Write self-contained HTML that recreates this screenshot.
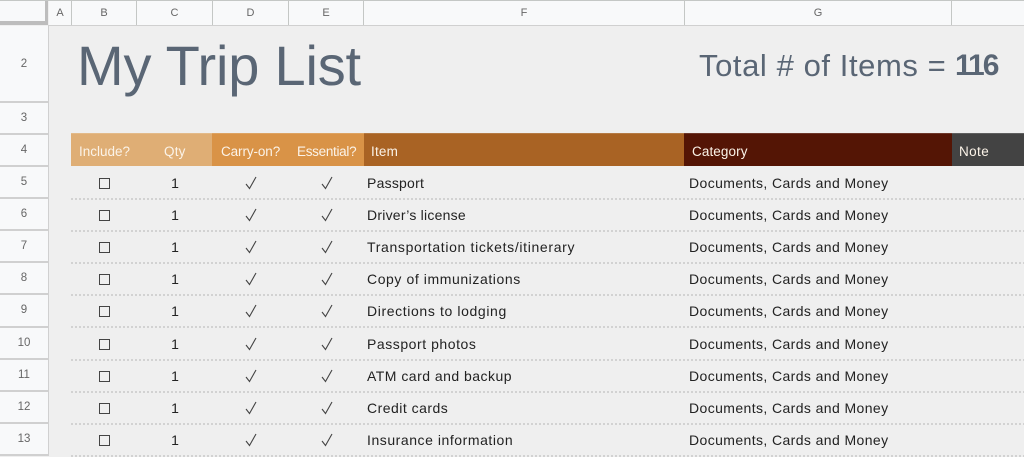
<!DOCTYPE html>
<html><head><meta charset="utf-8"><style>
html,body{margin:0;padding:0}
body{width:1024px;height:456px;overflow:hidden;background:#efefef;position:relative;font-family:"Liberation Sans",sans-serif}
div{position:absolute;white-space:nowrap}
.ch{top:1px;height:24px;background:#f8f9fa;border-right:1px solid #c4c7c5;color:#666;font-size:11px;line-height:25px;text-align:center}
.rh{left:0;width:48px;background:#f8f9fa;border-bottom:2px solid #d0d0d0;box-sizing:border-box;color:#666;font-size:11.5px;text-align:center}
.h{top:133px;height:33px;line-height:37px;color:#fbf3e8;font-size:13.5px;letter-spacing:.2px;border-top:1px solid rgba(255,255,255,.15);box-sizing:border-box}
.c{text-align:center;color:#222;font-size:14px;height:20px;line-height:20px}
.t{color:#222;font-size:14px;letter-spacing:.4px;height:20px;line-height:20px}
.d{left:71px;width:953px;height:2px;background:repeating-linear-gradient(90deg,#d2d2d2 0,#d2d2d2 2px,transparent 2px,transparent 4px)}
.b{left:99px;width:9px;height:9px;border:1px solid #444}
svg{position:absolute}
</style></head><body>
<div style="left:0;top:0;width:1024px;height:1px;background:#c4c7c5"></div>
<div style="left:0;top:1px;width:45px;height:20px;background:#f8f9fa;border-right:3px solid #bdbdbd;border-bottom:4px solid #bdbdbd"></div>
<div class="ch" style="left:49px;width:22px">A</div>
<div class="ch" style="left:72px;width:64px">B</div>
<div class="ch" style="left:137px;width:75px">C</div>
<div class="ch" style="left:213px;width:75px">D</div>
<div class="ch" style="left:289px;width:74px">E</div>
<div class="ch" style="left:364px;width:320px">F</div>
<div class="ch" style="left:685px;width:266px">G</div>
<div class="ch" style="left:952px;width:72px;border-right:0"></div>
<div style="left:48px;top:25px;width:976px;height:1px;background:#d0d0d0"></div>
<div style="left:48px;top:26px;width:1px;height:430px;background:#d0d0d0"></div>

<div class="rh" style="top:26px;height:77px;line-height:76px">2</div>
<div class="rh" style="top:103px;height:32px;line-height:30px">3</div>
<div class="rh" style="top:135px;height:32px;line-height:30px">4</div>
<div class="rh" style="top:167px;height:32px;line-height:30px">5</div>
<div class="rh" style="top:199px;height:32px;line-height:30px">6</div>
<div class="rh" style="top:231px;height:32px;line-height:30px">7</div>
<div class="rh" style="top:263px;height:32px;line-height:30px">8</div>
<div class="rh" style="top:295px;height:33px;line-height:30px">9</div>
<div class="rh" style="top:328px;height:32px;line-height:30px">10</div>
<div class="rh" style="top:360px;height:32px;line-height:30px">11</div>
<div class="rh" style="top:392px;height:32px;line-height:30px">12</div>
<div class="rh" style="top:424px;height:32px;line-height:30px">13</div>

<div style="left:77px;top:32px;font-size:56px;line-height:68px;color:#5a6675;letter-spacing:-.2px">My Trip List</div>
<div style="left:699px;top:46px;font-size:31px;line-height:40px;color:#5a6675;letter-spacing:.58px">Total # of Items = </div>
<div style="left:955px;top:46px;font-size:30px;line-height:40px;color:#5a6675;letter-spacing:-2px;font-weight:bold">116</div>

<div class="h" style="left:71px;width:141px;background:#dfae75"></div>
<div class="h" style="left:212px;width:152px;background:#d99347"></div>
<div class="h" style="left:364px;width:320px;background:#a96324"></div>
<div class="h" style="left:684px;width:268px;background:#541505"></div>
<div class="h" style="left:952px;width:72px;background:#434343"></div>
<div class="h" style="left:79px;background:none;border:0;letter-spacing:0">Include?</div>
<div class="h" style="left:164px;background:none;border:0">Qty</div>
<div class="h" style="left:221px;background:none;border:0;letter-spacing:-.1px">Carry-on?</div>
<div class="h" style="left:297px;background:none;border:0;letter-spacing:-.3px">Essential?</div>
<div class="h" style="left:371px;background:none;border:0">Item</div>
<div class="h" style="left:692px;background:none;border:0;letter-spacing:.1px">Category</div>
<div class="h" style="left:959px;background:none;border:0;letter-spacing:.4px">Note</div>

<div class="d" style="top:198px"></div><div class="d" style="top:230px"></div><div class="d" style="top:262px"></div><div class="d" style="top:294px"></div><div class="d" style="top:326px"></div><div class="d" style="top:359px"></div><div class="d" style="top:391px"></div><div class="d" style="top:423px"></div><div class="d" style="top:455px"></div>

<div class="b" style="top:178px"></div><div class="c" style="left:165px;width:20px;top:173px">1</div>
<svg style="left:244px;top:176px" width="14" height="14"><path d="M2 8L5.5 12.5L12 1" fill="none" stroke="#444" stroke-width="1.1"/></svg>
<svg style="left:320px;top:176px" width="14" height="14"><path d="M2 8L5.5 12.5L12 1" fill="none" stroke="#444" stroke-width="1.1"/></svg>
<div class="t" style="left:367px;top:173px;letter-spacing:.23px">Passport</div><div class="t" style="left:689px;top:173px">Documents, Cards and Money</div>

<div class="b" style="top:210px"></div><div class="c" style="left:165px;width:20px;top:205px">1</div>
<svg style="left:244px;top:208px" width="14" height="14"><path d="M2 8L5.5 12.5L12 1" fill="none" stroke="#444" stroke-width="1.1"/></svg>
<svg style="left:320px;top:208px" width="14" height="14"><path d="M2 8L5.5 12.5L12 1" fill="none" stroke="#444" stroke-width="1.1"/></svg>
<div class="t" style="left:367px;top:205px;letter-spacing:.23px">Driver’s license</div><div class="t" style="left:689px;top:205px">Documents, Cards and Money</div>

<div class="b" style="top:242px"></div><div class="c" style="left:165px;width:20px;top:237px">1</div>
<svg style="left:244px;top:240px" width="14" height="14"><path d="M2 8L5.5 12.5L12 1" fill="none" stroke="#444" stroke-width="1.1"/></svg>
<svg style="left:320px;top:240px" width="14" height="14"><path d="M2 8L5.5 12.5L12 1" fill="none" stroke="#444" stroke-width="1.1"/></svg>
<div class="t" style="left:367px;top:237px;letter-spacing:.66px">Transportation tickets/itinerary</div><div class="t" style="left:689px;top:237px">Documents, Cards and Money</div>

<div class="b" style="top:274px"></div><div class="c" style="left:165px;width:20px;top:269px">1</div>
<svg style="left:244px;top:272px" width="14" height="14"><path d="M2 8L5.5 12.5L12 1" fill="none" stroke="#444" stroke-width="1.1"/></svg>
<svg style="left:320px;top:272px" width="14" height="14"><path d="M2 8L5.5 12.5L12 1" fill="none" stroke="#444" stroke-width="1.1"/></svg>
<div class="t" style="left:367px;top:269px;letter-spacing:.58px">Copy of immunizations</div><div class="t" style="left:689px;top:269px">Documents, Cards and Money</div>

<div class="b" style="top:306px"></div><div class="c" style="left:165px;width:20px;top:301px">1</div>
<svg style="left:244px;top:304px" width="14" height="14"><path d="M2 8L5.5 12.5L12 1" fill="none" stroke="#444" stroke-width="1.1"/></svg>
<svg style="left:320px;top:304px" width="14" height="14"><path d="M2 8L5.5 12.5L12 1" fill="none" stroke="#444" stroke-width="1.1"/></svg>
<div class="t" style="left:367px;top:301px;letter-spacing:.62px">Directions to lodging</div><div class="t" style="left:689px;top:301px">Documents, Cards and Money</div>

<div class="b" style="top:339px"></div><div class="c" style="left:165px;width:20px;top:334px">1</div>
<svg style="left:244px;top:337px" width="14" height="14"><path d="M2 8L5.5 12.5L12 1" fill="none" stroke="#444" stroke-width="1.1"/></svg>
<svg style="left:320px;top:337px" width="14" height="14"><path d="M2 8L5.5 12.5L12 1" fill="none" stroke="#444" stroke-width="1.1"/></svg>
<div class="t" style="left:367px;top:334px;letter-spacing:.55px">Passport photos</div><div class="t" style="left:689px;top:334px">Documents, Cards and Money</div>

<div class="b" style="top:371px"></div><div class="c" style="left:165px;width:20px;top:366px">1</div>
<svg style="left:244px;top:369px" width="14" height="14"><path d="M2 8L5.5 12.5L12 1" fill="none" stroke="#444" stroke-width="1.1"/></svg>
<svg style="left:320px;top:369px" width="14" height="14"><path d="M2 8L5.5 12.5L12 1" fill="none" stroke="#444" stroke-width="1.1"/></svg>
<div class="t" style="left:367px;top:366px;letter-spacing:.48px">ATM card and backup</div><div class="t" style="left:689px;top:366px">Documents, Cards and Money</div>

<div class="b" style="top:403px"></div><div class="c" style="left:165px;width:20px;top:398px">1</div>
<svg style="left:244px;top:401px" width="14" height="14"><path d="M2 8L5.5 12.5L12 1" fill="none" stroke="#444" stroke-width="1.1"/></svg>
<svg style="left:320px;top:401px" width="14" height="14"><path d="M2 8L5.5 12.5L12 1" fill="none" stroke="#444" stroke-width="1.1"/></svg>
<div class="t" style="left:367px;top:398px;letter-spacing:.48px">Credit cards</div><div class="t" style="left:689px;top:398px">Documents, Cards and Money</div>

<div class="b" style="top:435px"></div><div class="c" style="left:165px;width:20px;top:430px">1</div>
<svg style="left:244px;top:433px" width="14" height="14"><path d="M2 8L5.5 12.5L12 1" fill="none" stroke="#444" stroke-width="1.1"/></svg>
<svg style="left:320px;top:433px" width="14" height="14"><path d="M2 8L5.5 12.5L12 1" fill="none" stroke="#444" stroke-width="1.1"/></svg>
<div class="t" style="left:367px;top:430px;letter-spacing:.55px">Insurance information</div><div class="t" style="left:689px;top:430px">Documents, Cards and Money</div>
</body></html>
